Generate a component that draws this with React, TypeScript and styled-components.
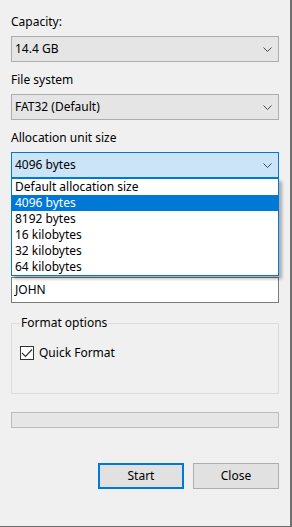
import React from 'react';
import styled, { createGlobalStyle } from 'styled-components';

const GlobalStyle = createGlobalStyle`
  html, body {
    margin: 0;
    padding: 0;
    background: #f0f0f0;
  }
  * {
    box-sizing: border-box;
  }
`;

const Window = styled.div`
  width: 292px;
  height: 527px;
  background: #f0f0f0;
  border-right: 2px solid #6f6f6f;
  border-bottom: 1px solid #6f6f6f;
  padding: 14px 11px 0 11px;
  display: flex;
  flex-direction: column;
  font-family: 'Noto Sans', 'Open Sans', sans-serif;
  font-size: 12px;
  line-height: 16px;
  color: #000;
`;

const Field = styled.div<{ $gap?: number }>`
  display: flex;
  flex-direction: column;
  margin-top: ${p => p.$gap ?? 0}px;
  position: relative;
`;

const Label = styled.div`
  height: 16px;
  margin-bottom: 6px;
  white-space: nowrap;
`;

const Combo = styled.div<{ $open?: boolean }>`
  height: 26px;
  display: flex;
  align-items: center;
  justify-content: space-between;
  padding: 0 6px 0 3px;
  border: 1px solid ${p => (p.$open ? '#0078d7' : '#adadad')};
  background: ${p => (p.$open ? '#cce4f7' : '#e5e5e5')};
  white-space: nowrap;
`;

const Chevron = () => (
  <svg width="9" height="5" viewBox="0 0 9 5" fill="none">
    <polyline points="0.5,0.5 4.5,4.5 8.5,0.5" stroke="#4a4a4a" strokeWidth="1" />
  </svg>
);

const DropList = styled.ul`
  position: absolute;
  left: 0;
  right: 0;
  top: 100%;
  margin: 0;
  padding: 0;
  list-style: none;
  background: #fff;
  border: 1px solid #0078d7;
  box-shadow: 3px 3px 3px rgba(0, 0, 0, 0.28);
  z-index: 10;
`;

const DropItem = styled.li<{ $selected?: boolean }>`
  height: 16px;
  line-height: 16px;
  padding-left: 3px;
  white-space: nowrap;
  background: ${p => (p.$selected ? '#0078d7' : 'transparent')};
  color: ${p => (p.$selected ? '#fff' : '#000')};
`;

const TextBox = styled.div`
  height: 26px;
  display: flex;
  align-items: center;
  padding-left: 3px;
  background: #fff;
  border: 1px solid #7a7a7a;
`;

const Group = styled.fieldset`
  margin: 12px 0 0 0;
  padding: 14px 8px 0 8px;
  height: 79px;
  border: 1px solid #dcdcdc;
`;

const Legend = styled.legend`
  padding: 0 1px;
  margin-left: 0;
  line-height: 16px;
`;

const CheckRow = styled.label`
  display: flex;
  align-items: center;
  gap: 5px;
`;

const CheckBox = styled.span`
  width: 14px;
  height: 14px;
  border: 1px solid #333;
  background: #fff;
  display: flex;
  align-items: center;
  justify-content: center;
`;

const Progress = styled.div`
  margin-top: 18px;
  height: 16px;
  border: 1px solid #bcbcbc;
  background: #e6e6e6;
`;

const ButtonRow = styled.div`
  margin-top: 35px;
  display: flex;
  justify-content: flex-end;
  gap: 9px;
`;

const Button = styled.div<{ $default?: boolean }>`
  width: 86px;
  height: 26px;
  display: flex;
  align-items: center;
  justify-content: center;
  background: #e1e1e1;
  border: ${p => (p.$default ? '2px solid #0078d7' : '1px solid #adadad')};
`;

const sizes = [
  'Default allocation size',
  '4096 bytes',
  '8192 bytes',
  '16 kilobytes',
  '32 kilobytes',
  '64 kilobytes',
];

export default function App() {
  return (
    <>
      <GlobalStyle />
      <Window>
        <Field>
          <Label>Capacity:</Label>
          <Combo>
            <span>14.4 GB</span>
            <Chevron />
          </Combo>
        </Field>

        <Field $gap={10}>
          <Label>File system</Label>
          <Combo>
            <span>FAT32 (Default)</span>
            <Chevron />
          </Combo>
        </Field>

        <Field $gap={10}>
          <Label>Allocation unit size</Label>
          <Combo $open>
            <span>4096 bytes</span>
            <Chevron />
          </Combo>
          <DropList>
            {sizes.map(s => (
              <DropItem key={s} $selected={s === '4096 bytes'}>
                {s}
              </DropItem>
            ))}
          </DropList>
        </Field>

        {/* volume label row; its caption sits under the open list */}
        <Field $gap={99}>
          <TextBox>JOHN</TextBox>
        </Field>

        <Group>
          <Legend>Format options</Legend>
          <CheckRow>
            <CheckBox>
              <svg width="12" height="10" viewBox="0 0 12 10" fill="none">
                <polyline points="1,5 4.5,8.5 11,1.5" stroke="#333" strokeWidth="1.2" />
              </svg>
            </CheckBox>
            Quick Format
          </CheckRow>
        </Group>

        <Progress />

        <ButtonRow>
          <Button $default>Start</Button>
          <Button>Close</Button>
        </ButtonRow>
      </Window>
    </>
  );
}
